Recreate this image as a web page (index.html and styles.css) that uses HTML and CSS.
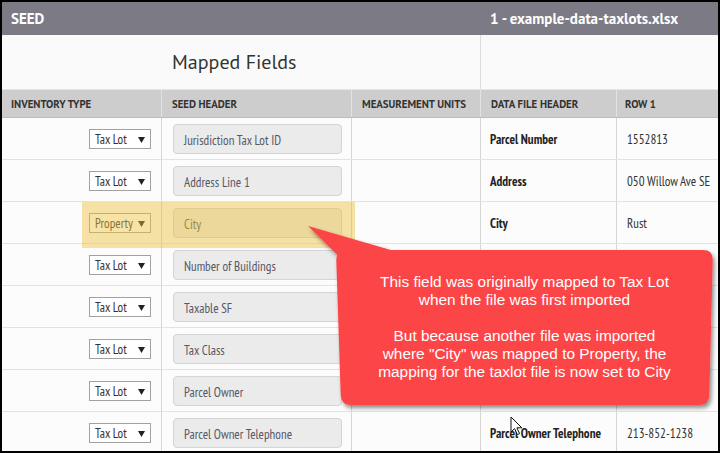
FILE: index.html
```html
<!DOCTYPE html>
<html>
<head>
<meta charset="utf-8">
<title>SEED - Mapped Fields</title>
<link rel="stylesheet" href="styles.css">
</head>
<body>
<div class="frame">
  <div class="topbar">
    <div class="brand">SEED</div>
    <div class="filename">1 - example-data-taxlots.xlsx</div>
  </div>
  <div class="titlerow">
    <div class="title">Mapped Fields</div>
    <div class="title-right"></div>
  </div>
  <div class="grid thead">
    <div class="th">Inventory Type</div>
    <div class="th">SEED Header</div>
    <div class="th">Measurement Units</div>
    <div class="th">Data File Header</div>
    <div class="th">Row 1</div>
  </div>

  <div class="grid row">
    <div class="c-type"><div class="select"><span>Tax Lot</span><svg class="caret" viewBox="0 0 8 8"><path d="M0 1h8L4 8z"/></svg></div></div>
    <div class="c-seed"><div class="field">Jurisdiction Tax Lot ID</div></div>
    <div class="c-units"></div>
    <div class="c-head">Parcel Number</div>
    <div class="c-val">1552813</div>
  </div>
  <div class="grid row">
    <div class="c-type"><div class="select"><span>Tax Lot</span><svg class="caret" viewBox="0 0 8 8"><path d="M0 1h8L4 8z"/></svg></div></div>
    <div class="c-seed"><div class="field">Address Line 1</div></div>
    <div class="c-units"></div>
    <div class="c-head">Address</div>
    <div class="c-val">050 Willow Ave SE</div>
  </div>
  <div class="grid row">
    <div class="c-type"><div class="select"><span>Property</span><svg class="caret" viewBox="0 0 8 8"><path d="M0 1h8L4 8z"/></svg></div></div>
    <div class="c-seed"><div class="field">City</div></div>
    <div class="c-units"></div>
    <div class="c-head">City</div>
    <div class="c-val">Rust</div>
  </div>
  <div class="grid row">
    <div class="c-type"><div class="select"><span>Tax Lot</span><svg class="caret" viewBox="0 0 8 8"><path d="M0 1h8L4 8z"/></svg></div></div>
    <div class="c-seed"><div class="field">Number of Buildings</div></div>
    <div class="c-units"></div>
    <div class="c-head"></div>
    <div class="c-val"></div>
  </div>
  <div class="grid row">
    <div class="c-type"><div class="select"><span>Tax Lot</span><svg class="caret" viewBox="0 0 8 8"><path d="M0 1h8L4 8z"/></svg></div></div>
    <div class="c-seed"><div class="field">Taxable SF</div></div>
    <div class="c-units"></div>
    <div class="c-head"></div>
    <div class="c-val"></div>
  </div>
  <div class="grid row">
    <div class="c-type"><div class="select"><span>Tax Lot</span><svg class="caret" viewBox="0 0 8 8"><path d="M0 1h8L4 8z"/></svg></div></div>
    <div class="c-seed"><div class="field">Tax Class</div></div>
    <div class="c-units"></div>
    <div class="c-head"></div>
    <div class="c-val"></div>
  </div>
  <div class="grid row">
    <div class="c-type"><div class="select"><span>Tax Lot</span><svg class="caret" viewBox="0 0 8 8"><path d="M0 1h8L4 8z"/></svg></div></div>
    <div class="c-seed"><div class="field">Parcel Owner</div></div>
    <div class="c-units"></div>
    <div class="c-head"></div>
    <div class="c-val"></div>
  </div>
  <div class="grid row">
    <div class="c-type"><div class="select"><span>Tax Lot</span><svg class="caret" viewBox="0 0 8 8"><path d="M0 1h8L4 8z"/></svg></div></div>
    <div class="c-seed"><div class="field">Parcel Owner Telephone</div></div>
    <div class="c-units"></div>
    <div class="c-head">Parcel Owner Telephone</div>
    <div class="c-val">213-852-1238</div>
  </div>

  <div class="highlight"></div>

  <svg class="callout-shape" width="720" height="453" viewBox="0 0 720 453">
    <defs>
      <filter id="sh" x="-10%" y="-10%" width="130%" height="140%">
        <feDropShadow dx="2" dy="3" stdDeviation="2.2" flood-color="#000" flood-opacity="0.45"/>
      </filter>
    </defs>
    <g filter="url(#sh)" fill="#fc4547">
      <path d="M346 250 L703 250 Q713 250 712.7 260 L709.3 395 Q709 405 699 405 L351 405 Q341 405 340.7 395 L336.3 260 Q336 250 346 250 Z"/>
      <polygon points="308,226 396,251.5 350,266 337.5,255"/>
    </g>
  </svg>
  <div class="callout-text">
    <p>This field was originally mapped to Tax Lot<br>when the file was first imported</p>
    <p>But because another file was imported<br>where "City" was mapped to Property, the<br>mapping for the taxlot file is now set to City</p>
  </div>

  <svg class="cursor" width="14" height="20" viewBox="0 0 14 20">
    <path d="M1 1 L1 16 L4.6 12.6 L7.4 18.6 L9.6 17.6 L6.9 11.8 L11.8 11.8 Z" fill="#fff" stroke="#111" stroke-width="1" stroke-linejoin="miter"/>
  </svg>
</div>
</body>
</html>
```
FILE: styles.css
```css
html, body {
  margin: 0;
  padding: 0;
  background: #000;
}
body {
  width: 720px;
  height: 453px;
  overflow: hidden;
  font-family: "PT Sans", "Roboto Condensed", Roboto, sans-serif;
}
.frame {
  position: relative;
  margin: 2px 2px 0 2px;
  width: 716px;
  height: 449px;
  overflow: hidden;
  background: #fafafa;
  color: #333;
}
.topbar {
  display: grid;
  grid-template-columns: 478px 1fr;
  height: 33px;
  align-items: center;
  background: #7b7a85;
  color: #fff;
  font-weight: bold;
  font-size: 15px;
}
.brand { padding-left: 9px; font-size: 15px; }
.filename { padding-left: 10px; }
.titlerow {
  display: grid;
  grid-template-columns: 478px 1fr;
  height: 54px;
}
.title {
  display: flex;
  align-items: center;
  padding-left: 170px;
  font-size: 20px;
  color: #333;
}
.title-right { border-left: 1px solid #dcdcdc; }
.grid {
  display: grid;
  grid-template-columns: 159px 190px 129px 136px 1fr;
}
.thead {
  height: 29px;
  box-sizing: border-box;
  border-top: 1px solid #e6e6e6;
  border-bottom: 1px solid #bcbcbc;
  background: #cdcdcd;
}
.th {
  display: flex;
  align-items: center;
  padding-left: 9px;
  padding-top: 1px;
  font-size: 10.8px;
  font-weight: bold;
  text-transform: uppercase;
  color: #333;
}
.th + .th { border-left: 1px solid #e2e2e2; padding-left: 10px; }
.th:last-child { padding-left: 8px; }
.row {
  height: 42px;
  box-sizing: border-box;
  border-bottom: 1px solid #e3e3e3;
  background: #fcfcfc;
  font-family: "PT Sans Narrow", "Open Sans", "Roboto Condensed", sans-serif;
  font-stretch: condensed;
}
.row > div {
  display: flex;
  align-items: center;
  min-width: 0;
}
.row > div + div { border-left: 1px solid #d6d6d6; }
.c-type {
  justify-content: flex-end;
  padding-right: 10px;
  padding-top: 1px;
}
.select {
  box-sizing: border-box;
  width: 62px;
  height: 20px;
  display: flex;
  align-items: center;
  justify-content: space-between;
  padding: 1px 5px 0 5px;
  border: 1px solid #a2a2a2;
  background: #fff;
  font-size: 13px;
  color: #333;
}
.caret { width: 7px; height: 7px; fill: #222; }
.c-seed { padding-left: 11px; padding-top: 1px; }
.field {
  box-sizing: border-box;
  width: 169px;
  height: 30px;
  display: flex;
  align-items: center;
  padding: 2px 0 0 10px;
  background: #ebebeb;
  border: 1px solid #d4d4d4;
  border-radius: 4px;
  font-size: 13px;
  color: #575766;
}
.c-head {
  padding: 2px 0 0 9px;
  font-weight: bold;
  font-size: 13px;
  color: #222;
  white-space: nowrap;
}
.c-val {
  padding: 2px 0 0 10px;
  font-size: 13px;
  color: #333;
  white-space: nowrap;
}
.highlight {
  position: absolute;
  left: 80px;
  top: 200px;
  width: 273px;
  height: 46px;
  background: rgba(237, 193, 57, 0.45);
}
.callout-shape {
  position: absolute;
  left: -2px;
  top: -2px;
}
.callout-text {
  position: absolute;
  left: 336px;
  top: 271px;
  width: 373px;
  text-align: center;
  font-family: "Liberation Sans", Arial, sans-serif;
  font-size: 15.4px;
  line-height: 18px;
  color: #fff;
}
.callout-text p { margin: 0 0 18px 0; }
.cursor {
  position: absolute;
  left: 508px;
  top: 414px;
}
```
